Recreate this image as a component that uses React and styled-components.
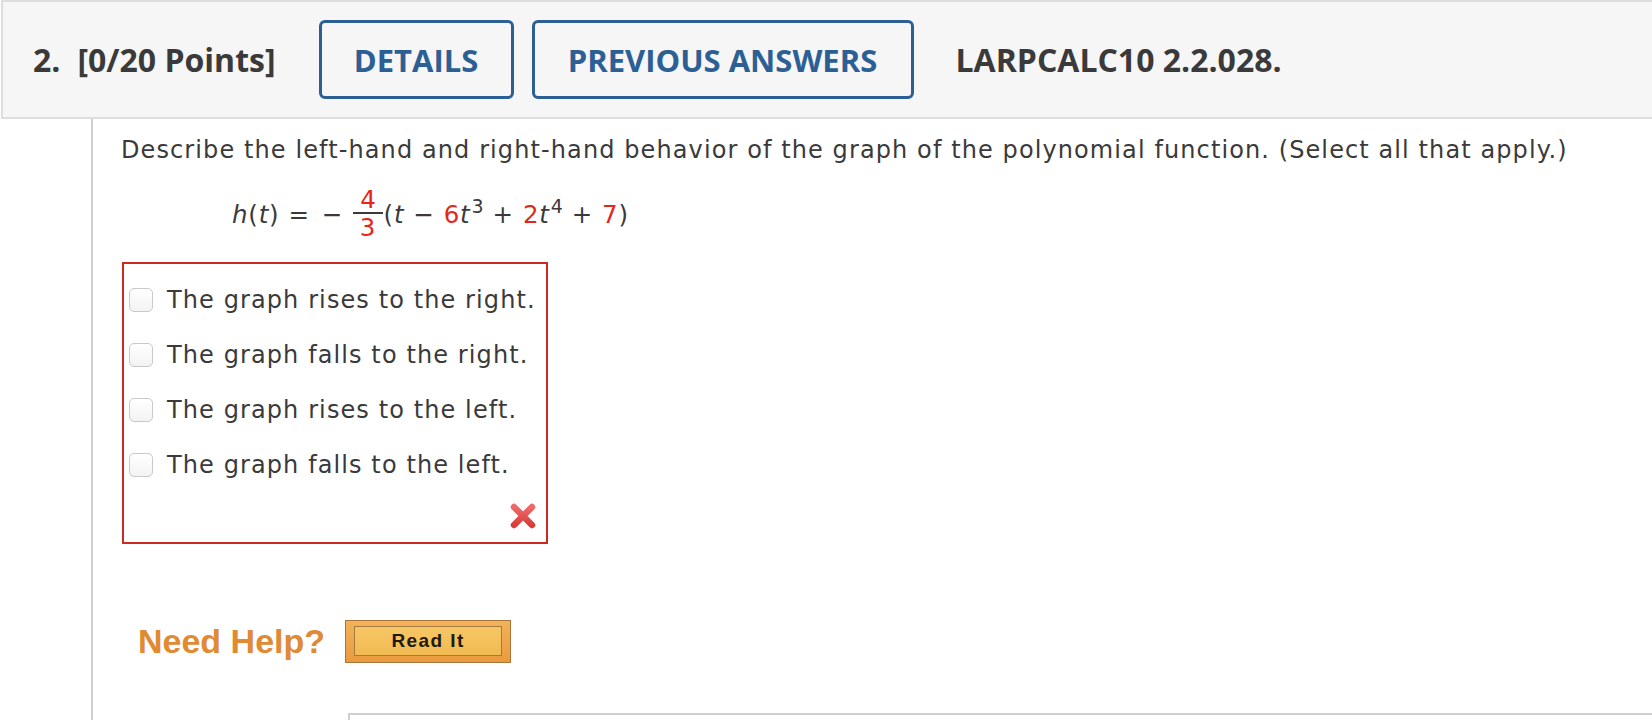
import React from "react";
import styled, { createGlobalStyle } from "styled-components";

const Global = createGlobalStyle`
  html, body { margin: 0; padding: 0; background: #fff; }
  body { width: 1652px; height: 720px; overflow: hidden; }
`;

const Page = styled.div`
  position: relative;
  width: 1652px;
  height: 720px;
  overflow: hidden;
`;

const Header = styled.div`
  box-sizing: border-box;
  height: 119px;
  margin-left: 1px;
  background: #f6f6f6;
  border: 2px solid #dedede;
  border-right: none;
  display: flex;
  align-items: center;
  padding-left: 30px;
  font-family: "Open Sans", sans-serif;
  font-weight: 700;
  color: #3a3a3a;
`;

const QNum = styled.span`
  font-size: 32px;
  margin-right: 17px;
`;

const Points = styled.span`
  font-size: 32px;
  margin-right: 43px;
`;

const OutlineButton = styled.div`
  box-sizing: border-box;
  height: 79px;
  width: ${(p) => p.w}px;
  border: 3px solid #2c6095;
  border-radius: 6px;
  display: flex;
  align-items: center;
  justify-content: center;
  color: #2c6095;
  font-size: 31px;
  margin-right: ${(p) => p.mr}px;
`;

const Ref = styled.span`
  font-size: 32px;
`;

const Body = styled.div`
  margin-left: 91px;
  border-left: 2px solid #cfcfcf;
  height: 601px;
  padding-left: 28px;
  padding-top: 13px;
  box-sizing: border-box;
  font-family: "DejaVu Sans", Verdana, sans-serif;
  color: #3a3a3a;
`;

const Prompt = styled.div`
  font-size: 24px;
  line-height: 36px;
  letter-spacing: 1.1px;
  white-space: nowrap;
`;

const Equation = styled.div`
  margin-top: 17px;
  margin-left: 111px;
  font-size: 24.5px;
  letter-spacing: 0.8px;
  line-height: 60px;
  height: 60px;
  white-space: nowrap;
`;

const Var = styled.i`
  font-style: italic;
`;

const Op = styled.span`
  display: inline-block;
  margin: 0 ${(p) => p.gap ?? 6}px;
`;

const Red = styled.span`
  color: #e5261b;
`;

const Frac = styled.span`
  display: inline-flex;
  flex-direction: column;
  align-items: center;
  vertical-align: middle;
  margin: 0 1px 0 7px;
  line-height: 25px;
  position: relative;
  top: -3px;
`;

const FracNum = styled.span`
  color: #e5261b;
  padding: 0 6px 0 7px;
  border-bottom: 2px solid #3a3a3a;
`;

const FracDen = styled.span`
  color: #e5261b;
  padding-top: 1px;
`;

const Sup = styled.sup`
  font-size: 19px;
  vertical-align: 10px;
  line-height: 0;
  letter-spacing: 0;
  margin-left: 1px;
`;

const AnswerBox = styled.div`
  position: relative;
  box-sizing: border-box;
  width: 426px;
  height: 282px;
  margin-top: 17px;
  margin-left: 1px;
  border: 2px solid #cc2a20;
  padding-top: 8px;
  padding-left: 5px;
`;

const Choice = styled.label`
  display: flex;
  align-items: center;
  height: 55px;
  font-size: 24px;
  color: #3a3a3a;
  letter-spacing: 1.1px;
  white-space: nowrap;
`;

const Box = styled.span`
  box-sizing: border-box;
  width: 24px;
  height: 24px;
  border: 1px solid #c9c9c9;
  border-radius: 5px;
  background: linear-gradient(#ffffff, #f3f3f3);
  margin-right: 14px;
  flex-shrink: 0;
`;

const WrongMark = styled.svg`
  position: absolute;
  right: 9px;
  bottom: 13px;
`;

const HelpRow = styled.div`
  display: flex;
  align-items: center;
  margin-top: 76px;
  margin-left: 17px;
`;

const NeedHelp = styled.span`
  font-family: "Liberation Sans", Arial, sans-serif;
  font-weight: bold;
  font-size: 34px;
  color: #e08a34;
  margin-right: 20px;
`;

const ReadIt = styled.div`
  box-sizing: border-box;
  width: 166px;
  height: 43px;
  background: linear-gradient(#f3b25a, #ea9a3e);
  border: 1px solid #a9753b;
  padding: 5px 8px 6px 8px;
  display: flex;
`;

const ReadItInner = styled.div`
  flex: 1;
  box-sizing: border-box;
  border: 1px solid #a47a3f;
  background: linear-gradient(#f6c665, #f1bb52);
  display: flex;
  align-items: center;
  justify-content: center;
  font-family: "Liberation Sans", Arial, sans-serif;
  font-weight: bold;
  font-size: 19px;
  letter-spacing: 1.4px;
  color: #1f1a10;
`;

const BottomPanel = styled.div`
  position: absolute;
  left: 348px;
  top: 713px;
  width: 1400px;
  height: 40px;
  border-top: 2px solid #cfcfcf;
  border-left: 2px solid #cfcfcf;
`;

const choices = [
  "The graph rises to the right.",
  "The graph falls to the right.",
  "The graph rises to the left.",
  "The graph falls to the left.",
];

export default function App() {
  return (
    <Page>
      <Global />
      <Header>
        <QNum>2.</QNum>
        <Points>[0/20 Points]</Points>
        <OutlineButton w={195} mr={18}>DETAILS</OutlineButton>
        <OutlineButton w={382} mr={42}>PREVIOUS ANSWERS</OutlineButton>
        <Ref>LARPCALC10 2.2.028.</Ref>
      </Header>
      <Body>
        <Prompt>
          Describe the left-hand and right-hand behavior of the graph of the polynomial function. (Select all that apply.)
        </Prompt>
        <Equation>
          <Var>h</Var>(<Var>t</Var>)
          <Op gap={9}>=</Op>
          <Op gap={3}>−</Op>
          <Frac>
            <FracNum>4</FracNum>
            <FracDen>3</FracDen>
          </Frac>
          (<Var>t</Var>
          <Op gap={9}>−</Op>
          <Red>6</Red><Var>t</Var><Sup>3</Sup>
          <Op gap={9}>+</Op>
          <Red>2</Red><Var>t</Var><Sup>4</Sup>
          <Op gap={9}>+</Op>
          <Red>7</Red>)
        </Equation>
        <AnswerBox>
          {choices.map((c) => (
            <Choice key={c}>
              <Box />
              {c}
            </Choice>
          ))}
          <WrongMark width="28" height="26" viewBox="0 0 28 26">
            <defs>
              <linearGradient id="xg" x1="0" y1="0" x2="0" y2="1">
                <stop offset="0" stopColor="#ee6a6a" />
                <stop offset="1" stopColor="#d83c3c" />
              </linearGradient>
            </defs>
            <path d="M5 4 L23 22 M23 4 L5 22" stroke="url(#xg)" strokeWidth="6.5" strokeLinecap="round" />
          </WrongMark>
        </AnswerBox>
        <HelpRow>
          <NeedHelp>Need Help?</NeedHelp>
          <ReadIt>
            <ReadItInner>Read It</ReadItInner>
          </ReadIt>
        </HelpRow>
      </Body>
      <BottomPanel />
    </Page>
  );
}
